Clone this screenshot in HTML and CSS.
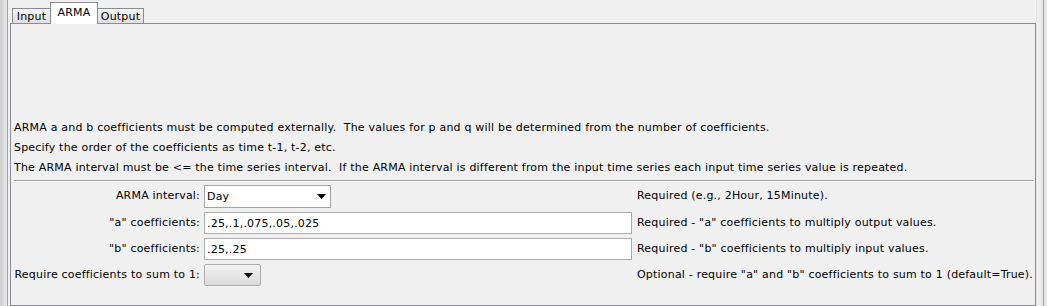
FILE: index.html
```html
<!DOCTYPE html>
<html lang="en">
<head>
  <meta charset="UTF-8">
  <title>ARMA</title>
  <link rel="stylesheet" href="styles.css">
</head>
<body>

  <div class="window">
    <div class="gutter"></div>

    <div class="tabpane">
      <div class="tabbar">
        <div class="tab tab-input">Input</div>
        <div class="tab tab-arma selected">ARMA</div>
        <div class="tab tab-output">Output</div>
      </div>

      <div class="panel">
        <div class="notes">
          <p>ARMA a and b coefficients must be computed externally.&nbsp; The values for p and q will be determined from the number of coefficients.</p>
          <p>Specify the order of the coefficients as time t-1, t-2, etc.</p>
          <p>The ARMA interval must be &lt;= the time series interval.&nbsp; If the ARMA interval is different from the input time series each input time series value is repeated.</p>
        </div>

        <div class="sep"></div>

        <div class="form">
          <label class="row-tall">ARMA interval:</label>
          <div class="field row-tall">
            <div class="combo">
              <span>Day</span>
              <svg width="9" height="5" viewBox="0 0 9 5"><path d="M0 0h9L4.5 5z" fill="#000"/></svg>
            </div>
          </div>
          <div class="help row-tall">Required (e.g., 2Hour, 15Minute).</div>

          <label>"a" coefficients:</label>
          <div class="field"><input type="text" value=".25,.1,.075,.05,.025"></div>
          <div class="help">Required - "a" coefficients to multiply output values.</div>

          <label>"b" coefficients:</label>
          <div class="field"><input type="text" value=".25,.25"></div>
          <div class="help">Required - "b" coefficients to multiply input values.</div>

          <label>Require coefficients to sum to 1:</label>
          <div class="field">
            <div class="combo empty">
              <svg width="9" height="5" viewBox="0 0 9 5"><path d="M0 0h9L4.5 5z" fill="#000"/></svg>
            </div>
          </div>
          <div class="help">Optional - require "a" and "b" coefficients to sum to 1 (default=True).</div>
        </div>
      </div>
    </div>

    <div class="rail"></div>
  </div>

</body>
</html>
```

FILE: styles.css
```css
body {
  margin: 0;
  background-color: #f0f0f0;
  font-family: "DejaVu Sans", Verdana, sans-serif;
  font-size: 11px;
  letter-spacing: 0.2px;
  color: #000;
}
.window {
  display: flex;
  height: 306px;
  overflow: hidden;
}
.gutter {
  width: 7px;
  flex: none;
  background: linear-gradient(to right, #cdcdcd, #e9e9e9);
  border-right: 1px solid #a0a0a0;
  margin-right: 2px;
}
.tabpane {
  width: 1026px;
  flex: none;
  display: flex;
  flex-direction: column;
}
.tabbar {
  height: 23px;
  display: flex;
  align-items: flex-end;
  padding-left: 2px;
}
.tab {
  height: 14px;
  line-height: 15px;
  box-sizing: content-box;
  text-align: center;
  border: 1px solid #898c95;
  border-bottom: none;
  background: linear-gradient(#f3f3f3, #e0e0e0);
  margin-left: -1px;
  white-space: nowrap;
}
.tab-input {
  width: 37px;
  margin-left: 0;
}
.tab-arma {
  width: 46px;
}
.tab-output {
  width: 45px;
}
.tab.selected {
  height: 21px;
  line-height: 20px;
  background: #fff;
  margin-bottom: -1px;
  position: relative;
  z-index: 1;
}
.panel {
  flex: 1;
  border: 1px solid #898c95;
  background-color: #f0f0f0;
  padding: 0 2px 0 3px;
}
.notes {
  padding-top: 94px;
}
.notes p {
  margin: 0;
  height: 20px;
  line-height: 20px;
  white-space: nowrap;
}
.sep {
  border-top: 1px solid #a0a0a0;
  border-bottom: 1px solid #fff;
  margin-top: 2px;
}
.form {
  display: grid;
  grid-template-columns: 186px 428px 1fr;
  grid-auto-rows: 22px;
  grid-template-rows: 23px;
  column-gap: 4px;
  row-gap: 4px;
  margin-top: 3px;
}
.form label {
  text-align: right;
  line-height: 22px;
  white-space: nowrap;
}
.form .help {
  padding-left: 1px;
  line-height: 22px;
  white-space: nowrap;
}
.row-tall {
  line-height: 23px;
}
.field {
  display: flex;
}
.field input {
  width: 100%;
  height: 22px;
  box-sizing: border-box;
  margin: 0;
  padding: 0 2px;
  border: 1px solid #abadb3;
  background: #fff;
  font-family: inherit;
  font-size: 11px;
  letter-spacing: 0.2px;
  outline: none;
}
.combo {
  width: 127px;
  height: 23px;
  box-sizing: border-box;
  border: 1px solid #a5a5a5;
  background: #fff;
  display: flex;
  align-items: center;
  justify-content: space-between;
  padding: 0 4px 0 2px;
}
.combo.empty {
  width: 57px;
  height: 22px;
  border-color: #acacac;
  border-radius: 2px;
  background: linear-gradient(#f2f2f2, #dadada);
  justify-content: flex-end;
  padding-right: 7px;
}
.rail {
  flex: 1;
  border-left: 1px solid transparent;
  background: linear-gradient(to right, #f0f0f0, #e4e4e4);
  position: relative;
}
.rail::after {
  content: "";
  position: absolute;
  top: 0;
  bottom: 0;
  right: 3px;
  border-left: 1px solid #a0a0a0;
}
```
